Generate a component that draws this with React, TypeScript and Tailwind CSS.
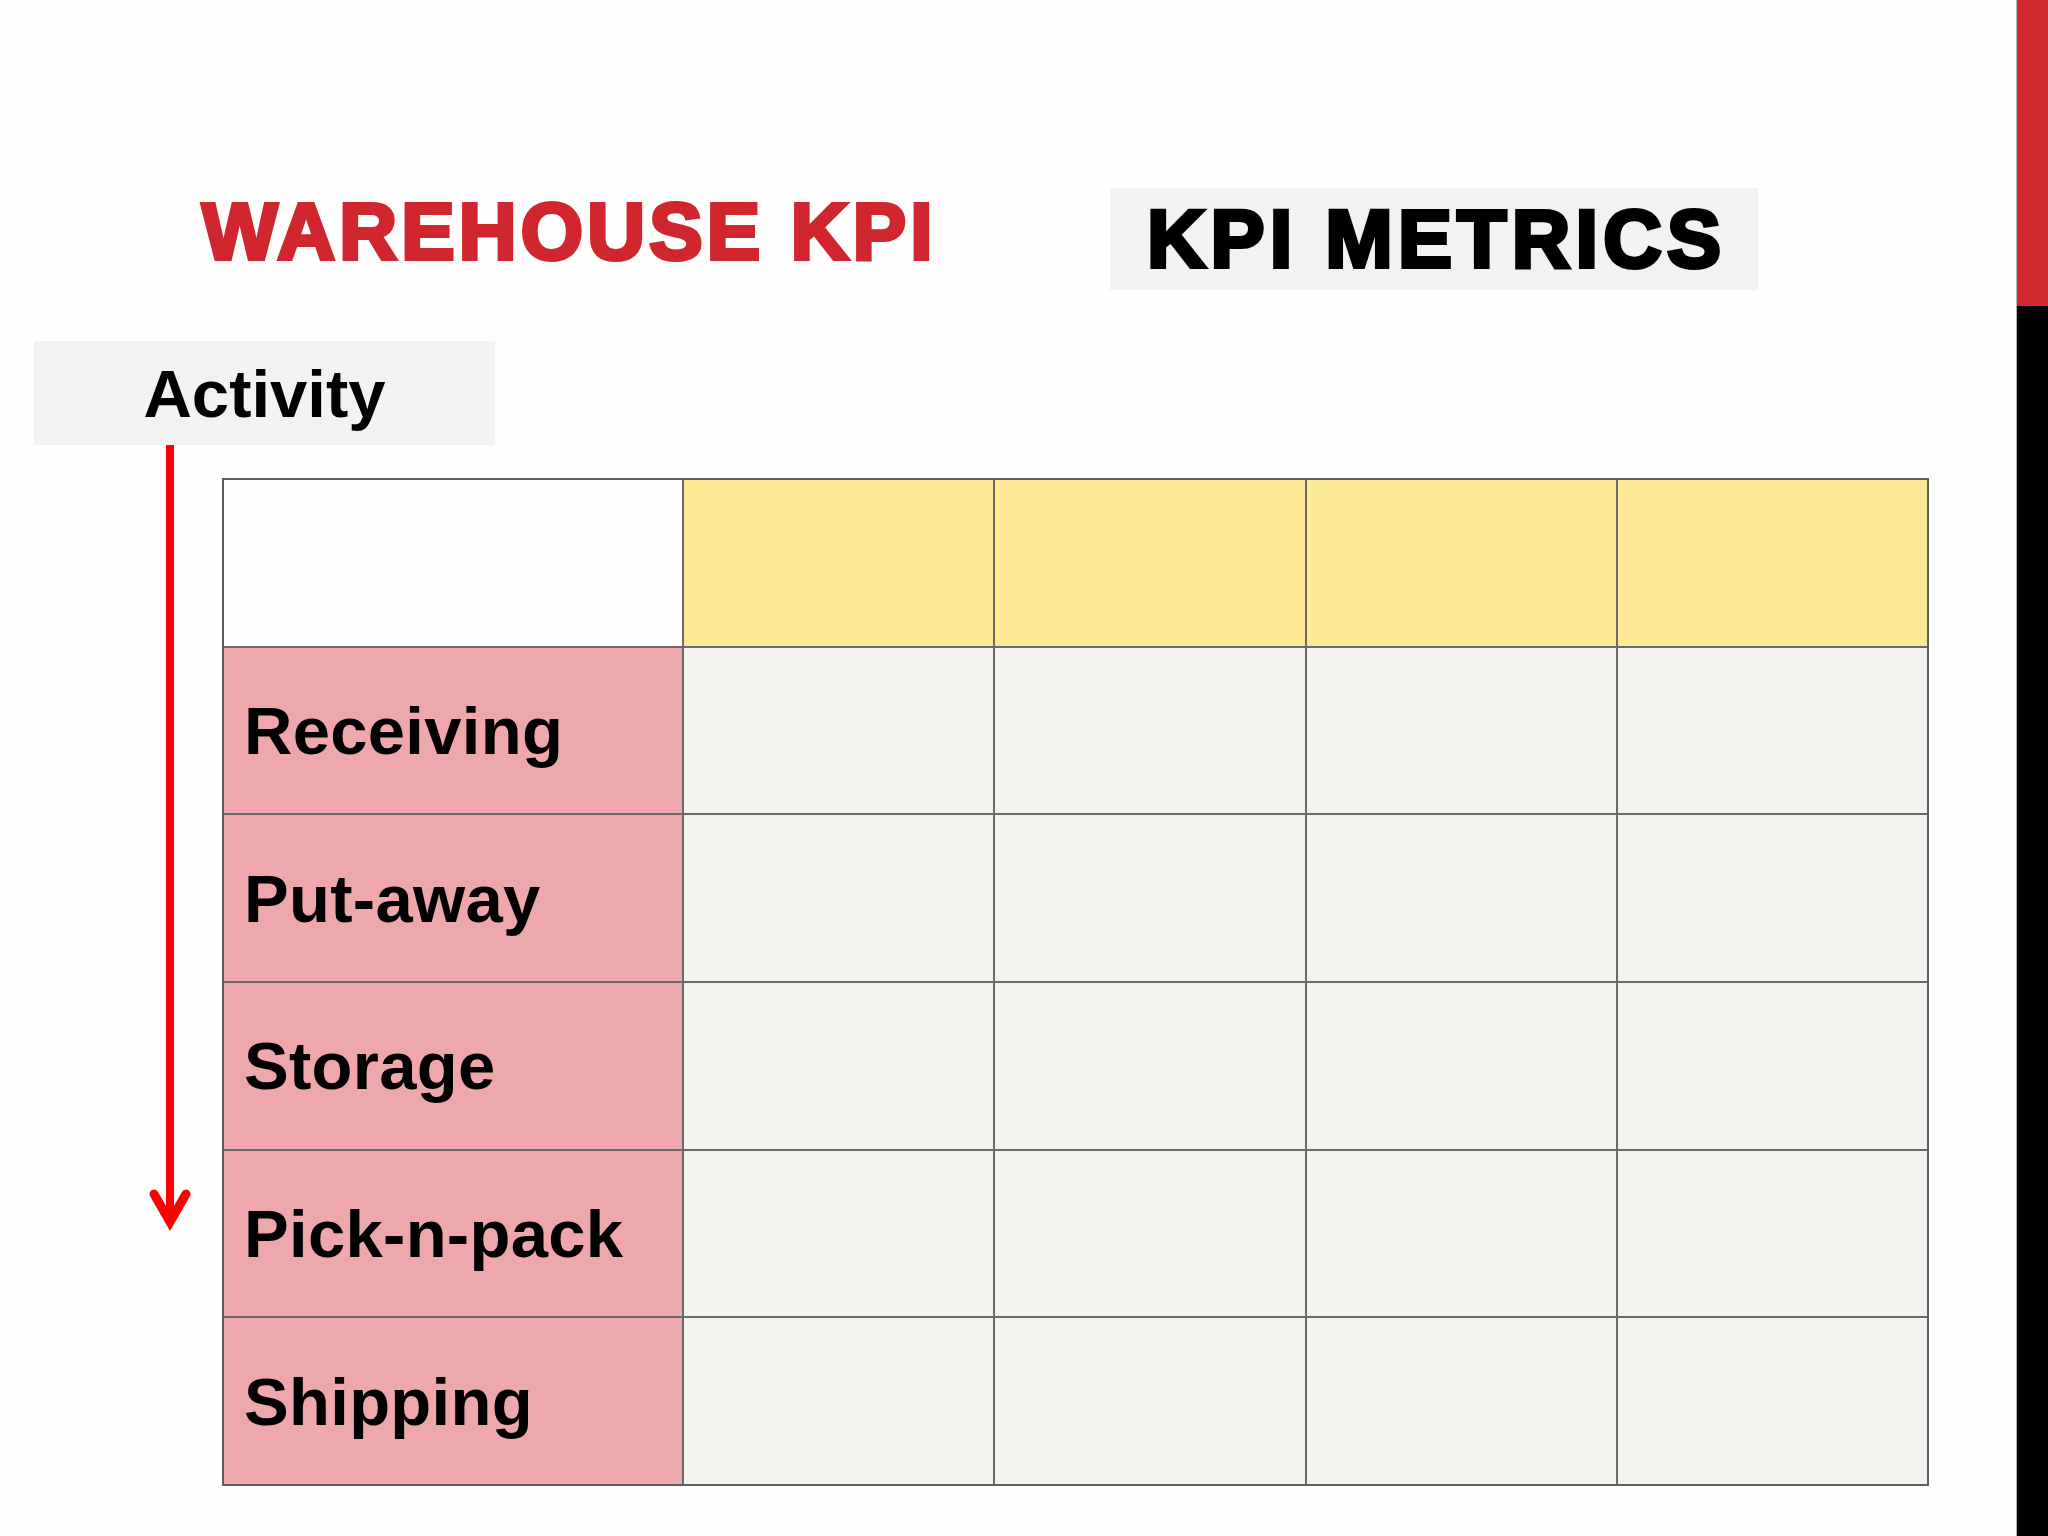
import React from 'react'

const activities = ['Receiving', 'Put-away', 'Storage', 'Pick-n-pack', 'Shipping']
const metricCols = [0, 1, 2, 3]

export default function App() {
  return (
    <div className="flex h-[1536px] w-[2048px] overflow-hidden bg-[#fefefe] font-['Liberation_Sans',Arial,sans-serif] text-black">
      <div className="flex flex-1 flex-col">
        {/* titles */}
        <div className="flex items-start pt-[188px]">
          <div className="w-[1110px] pl-[202px] pt-[4px]">
            <h1 className="text-[80px] font-bold leading-none tracking-[4.2px] text-[#d0262d] [-webkit-text-stroke:4px_#d0262d]">
              WAREHOUSE KPI
            </h1>
          </div>
          <div className="flex h-[102px] w-[648px] items-center justify-center bg-[#f2f2f0]">
            <h2 className="pl-[5px] text-[81px] font-bold leading-none tracking-[5.2px] [-webkit-text-stroke:4px_#000]">
              KPI METRICS
            </h2>
          </div>
        </div>

        {/* activity label */}
        <div className="ml-[34px] mt-[51px] flex h-[104px] w-[461px] items-center justify-center bg-[#f2f2f0]">
          <span className="text-[67px] font-bold leading-none">Activity</span>
        </div>

        <div className="flex items-start">
          <svg width="40" height="790" viewBox="0 0 40 790" className="ml-[150px] overflow-visible">
            <line x1="20" y1="0" x2="20" y2="770" stroke="#ff0000" strokeWidth="8" />
            <polyline points="4,749 20,777 36,749" fill="none" stroke="#ff0000" strokeWidth="9" strokeLinecap="round" strokeLinejoin="miter" />
          </svg>

          {/* matrix */}
          <div className="ml-[32px] mt-[33px] grid h-[1008px] w-[1707px] grid-cols-[458px_repeat(4,minmax(0,1fr))] grid-rows-6 gap-[2px] border-2 border-[#5e5e5e] bg-[#6a6a6a]">
            <div className="bg-[#fefefe]" />
            {metricCols.map((c) => (
              <div key={c} className="bg-[#fde895]" />
            ))}
            {activities.map((a) => (
              <React.Fragment key={a}>
                <div className="flex items-center bg-[#eea8ac] pl-[20px]">
                  <span className="text-[67px] font-bold leading-none tracking-[0.3px]">{a}</span>
                </div>
                {metricCols.map((c) => (
                  <div key={c} className="bg-[#f3f2ee]" />
                ))}
              </React.Fragment>
            ))}
          </div>
        </div>
      </div>

      <div className="flex w-[32px] flex-col border-l border-[#b5b5b5]">
        <div className="h-[306px] bg-[#d3292e]" />
        <div className="flex-1 bg-[#020003]" />
      </div>
    </div>
  )
}
